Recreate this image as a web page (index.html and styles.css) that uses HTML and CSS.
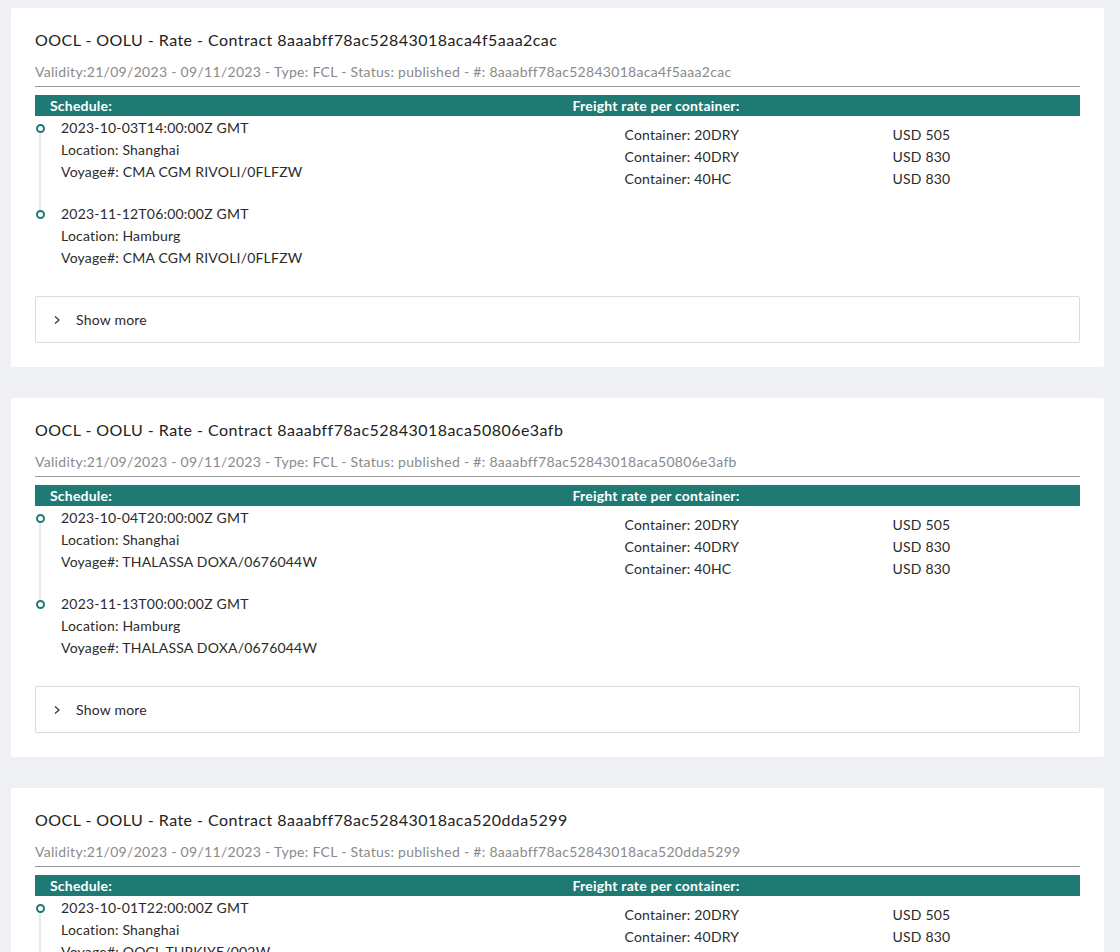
FILE: index.html
```html
<!DOCTYPE html>
<html lang="en">
<head>
  <meta charset="UTF-8">
  <meta name="viewport" content="width=device-width, initial-scale=1.0">
  <title>Rates</title>
  <link rel="stylesheet" href="styles.css">
</head>
<body>

  <div class="rate-list">

    <div class="rate-card">
      <div class="rate-title">OOCL - OOLU - Rate - Contract 8aaabff78ac52843018aca4f5aaa2cac</div>
      <div class="rate-meta">Validity:21/09/2023 - 09/11/2023 - Type: FCL - Status: published - #: 8aaabff78ac52843018aca4f5aaa2cac</div>
      <div class="rate-head">
        <div>Schedule:</div>
        <div>Freight rate per container:</div>
      </div>
      <div class="rate-body">
        <div class="timeline">
          <div class="stop">
            <div>2023-10-03T14:00:00Z GMT</div>
            <div>Location: Shanghai</div>
            <div>Voyage#: CMA CGM RIVOLI/0FLFZW</div>
          </div>
          <div class="stop">
            <div>2023-11-12T06:00:00Z GMT</div>
            <div>Location: Hamburg</div>
            <div>Voyage#: CMA CGM RIVOLI/0FLFZW</div>
          </div>
        </div>
        <div class="prices">
          <span>Container: 20DRY</span><span>USD 505</span>
          <span>Container: 40DRY</span><span>USD 830</span>
          <span>Container: 40HC</span><span>USD 830</span>
        </div>
      </div>
      <div class="show-more">
        <svg width="8" height="10" viewBox="0 0 8 10"><polyline points="2,1.5 6,5 2,8.5" fill="none" stroke="#333" stroke-width="1.2"/></svg>
        <span>Show more</span>
      </div>
    </div>

    <div class="rate-card">
      <div class="rate-title">OOCL - OOLU - Rate - Contract 8aaabff78ac52843018aca50806e3afb</div>
      <div class="rate-meta">Validity:21/09/2023 - 09/11/2023 - Type: FCL - Status: published - #: 8aaabff78ac52843018aca50806e3afb</div>
      <div class="rate-head">
        <div>Schedule:</div>
        <div>Freight rate per container:</div>
      </div>
      <div class="rate-body">
        <div class="timeline">
          <div class="stop">
            <div>2023-10-04T20:00:00Z GMT</div>
            <div>Location: Shanghai</div>
            <div>Voyage#: THALASSA DOXA/0676044W</div>
          </div>
          <div class="stop">
            <div>2023-11-13T00:00:00Z GMT</div>
            <div>Location: Hamburg</div>
            <div>Voyage#: THALASSA DOXA/0676044W</div>
          </div>
        </div>
        <div class="prices">
          <span>Container: 20DRY</span><span>USD 505</span>
          <span>Container: 40DRY</span><span>USD 830</span>
          <span>Container: 40HC</span><span>USD 830</span>
        </div>
      </div>
      <div class="show-more">
        <svg width="8" height="10" viewBox="0 0 8 10"><polyline points="2,1.5 6,5 2,8.5" fill="none" stroke="#333" stroke-width="1.2"/></svg>
        <span>Show more</span>
      </div>
    </div>

    <div class="rate-card">
      <div class="rate-title">OOCL - OOLU - Rate - Contract 8aaabff78ac52843018aca520dda5299</div>
      <div class="rate-meta">Validity:21/09/2023 - 09/11/2023 - Type: FCL - Status: published - #: 8aaabff78ac52843018aca520dda5299</div>
      <div class="rate-head">
        <div>Schedule:</div>
        <div>Freight rate per container:</div>
      </div>
      <div class="rate-body">
        <div class="timeline">
          <div class="stop">
            <div>2023-10-01T22:00:00Z GMT</div>
            <div>Location: Shanghai</div>
            <div>Voyage#: OOCL TURKIYE/002W</div>
          </div>
          <div class="stop">
            <div>2023-11-10T04:00:00Z GMT</div>
            <div>Location: Hamburg</div>
            <div>Voyage#: OOCL TURKIYE/002W</div>
          </div>
        </div>
        <div class="prices">
          <span>Container: 20DRY</span><span>USD 505</span>
          <span>Container: 40DRY</span><span>USD 830</span>
          <span>Container: 40HC</span><span>USD 830</span>
        </div>
      </div>
      <div class="show-more">
        <svg width="8" height="10" viewBox="0 0 8 10"><polyline points="2,1.5 6,5 2,8.5" fill="none" stroke="#333" stroke-width="1.2"/></svg>
        <span>Show more</span>
      </div>
    </div>

  </div>

</body>
</html>
```

FILE: styles.css
```css
body {
  font-family: Lato, "Open Sans", sans-serif;
  margin: 0;
  background: #eef0f4;
  color: #2b2b2b;
}

.rate-list {
  padding: 8px 16px 0 11px;
}

.rate-card {
  background: #fff;
  border-radius: 2px;
  padding: 24px;
  margin-bottom: 31px;
}

.rate-title {
  font-size: 16px;
  line-height: 18px;
  letter-spacing: 0.45px;
  color: #222;
  margin-top: -1px;
}

.rate-meta {
  font-size: 14px;
  line-height: 18px;
  letter-spacing: 0.3px;
  color: #8a8a8a;
  margin-top: 14px;
  padding-bottom: 5px;
  border-bottom: 1px solid #9a9a9a;
}

.rate-head {
  display: grid;
  grid-template-columns: 1fr 1fr;
  margin-top: 8px;
  background: #207a74;
  color: #fff;
  font-size: 14px;
  font-weight: 700;
  line-height: 21px;
  letter-spacing: 0.2px;
}

.rate-head div {
  padding-left: 15px;
}

.rate-body {
  display: grid;
  grid-template-columns: 1fr 1fr;
  font-size: 14px;
  line-height: 22px;
  letter-spacing: 0.2px;
  color: #2b2b2b;
}

.timeline {
  padding-top: 1px;
}

.stop {
  position: relative;
  padding-left: 26px;
  padding-bottom: 20px;
}

.stop::before {
  content: "";
  position: absolute;
  left: 1px;
  top: 7px;
  width: 5px;
  height: 5px;
  border: 2px solid #207a74;
  border-radius: 50%;
  background: #fff;
  z-index: 1;
}

.stop:not(:last-child)::after {
  content: "";
  position: absolute;
  left: 4px;
  top: 14px;
  bottom: -8px;
  width: 2px;
  background: #e8e8e8;
}

.prices {
  display: grid;
  grid-template-columns: 268px auto;
  align-content: start;
  padding-left: 67px;
  padding-top: 8px;
}

.show-more {
  display: flex;
  align-items: center;
  gap: 15px;
  height: 45px;
  margin-top: 7px;
  padding-left: 17px;
  border: 1px solid #dcdcdc;
  border-radius: 2px;
  font-size: 14px;
  letter-spacing: 0.2px;
  color: #2b2b2b;
}
```
